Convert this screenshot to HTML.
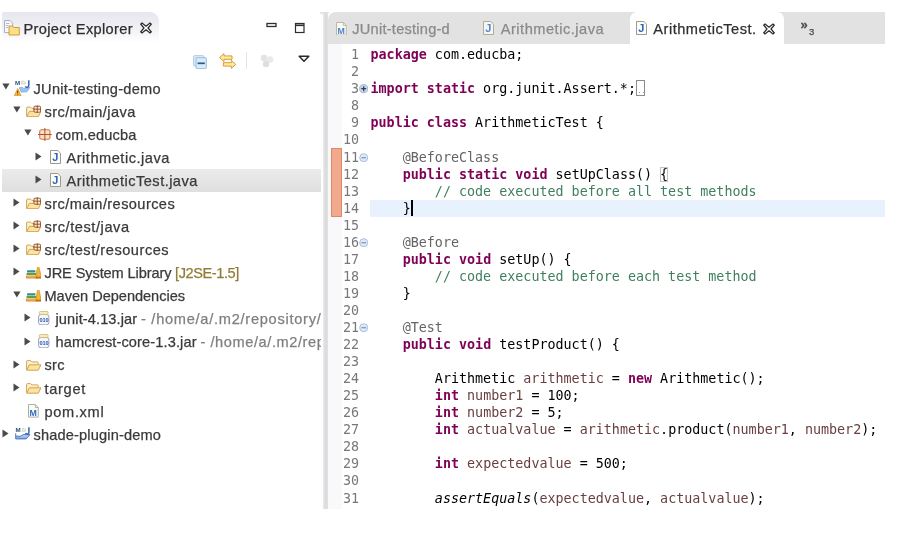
<!DOCTYPE html>
<html lang="en"><head><meta charset="utf-8"><title>Eclipse - ArithmeticTest.java</title>
<style>
html,body{margin:0;padding:0;background:#fff}
body{width:900px;height:537px;position:relative;overflow:hidden;font-family:"Liberation Sans","DejaVu Sans",sans-serif;font-size:14.6px;color:#3a3a3a;letter-spacing:.3px;-webkit-text-stroke:.25px}
.abs{position:absolute}
svg text{-webkit-text-stroke:0}
#all{position:absolute;left:0;top:0;width:900px;height:537px;will-change:transform}
#ptab{position:absolute;left:2px;top:12px;width:157px;height:31px;border-radius:2px 9px 0 0;background:linear-gradient(#e6e6ee,#f1f1f6 55%,#fbfbfd 85%,#fff)}
#ptab .tt{position:absolute;left:21.5px;top:8.500px;white-space:nowrap;color:#2f2f2f}
.row{position:absolute;left:2px;width:318.5px;height:23px;white-space:nowrap;overflow:hidden}
.row.sel{background:linear-gradient(#ebebeb,#dfdfdf)}
.row span.a,.row span.i,.row span.t{position:absolute}
.row span.a{margin-left:-2px;line-height:0}
.row span.i{margin-left:-2px;line-height:0}
.row span.t{top:3px;margin-left:-2px;line-height:18px}
.dy{color:#8f7d35}
.dg{color:#7f7f7f}
#sash{position:absolute;left:323px;top:12px;width:4.5px;height:497px;background:linear-gradient(90deg,#ebebeb,#dadada 55%,#e2e2e2)}
#flare{position:absolute;left:320px;top:12px;width:9px;height:3px;background:linear-gradient(#dedede,#f2f2f2);border-radius:0 0 4px 4px}
#etabs{position:absolute;left:327.5px;top:12px;width:557.5px;height:31.700px;background:#e2e2e2;border-radius:8px 0 0 0}
#etabs .tb{position:absolute;top:9px;white-space:nowrap;color:#8a8a8a}
#atab{position:absolute;left:302px;top:0;width:154px;height:32px;background:#fff;border-radius:7px 7px 0 0}
#ruler{position:absolute;left:328px;top:43.5px;width:14px;height:465px;background:#f9f9fb}
#range{position:absolute;left:330.700px;top:148.300px;width:11.500px;height:68.300px;background:#f3a98b;border:1px solid #d98a6b;box-sizing:border-box}
#curline{position:absolute;left:370px;top:199.5px;width:515px;height:17px;background:#e8f2fe}
.ln{position:absolute;left:327px;height:17px;width:560px;font-family:"DejaVu Sans Mono","Liberation Mono",monospace;font-size:13.36px;line-height:17px;letter-spacing:0;-webkit-text-stroke:0;white-space:pre;color:#000}
.ln .no{position:absolute;left:0;width:32px;text-align:right;color:#787878}
.ln .cd{position:absolute;left:43.5px}
.ln .fo{position:absolute;left:31.500px;top:4.200px}
.k{color:#7f0055;font-weight:bold}
.f{color:#6a3e3e}
.c{color:#3f7f5f}
.an{color:#646464}
.box{display:inline-block;position:relative;width:9px;height:15.500px;border:1px solid #8c8c8c;vertical-align:-2.700px;margin-left:.300px;box-sizing:border-box}
.box:after{content:'';position:absolute;left:1.500px;bottom:1.500px;width:1px;height:1.200px;background:#9a9a9a;box-shadow:4px 0 0 #9a9a9a}
.br{outline:1px solid #c2c2c2;outline-offset:-1px}
.caret{display:inline-block;width:2px;height:16px;background:#000;vertical-align:-3.500px}
</style></head>
<body>
<div id="all">
<div id="ptab"><span class="tt" style="letter-spacing:0.354px">Project Explorer</span></div>

<!-- project explorer tab icon -->
<svg class="abs" style="left:3.500px;top:19.500px" width="16.500" height="16" viewBox="0 0 16.500 16"><path d="M0.600 0.600h5.400l2.600 2.600v9.400h-8z" fill="#fcfcff" stroke="#a3a3ae" stroke-width=".9"/><path d="M2 3.500h3.500M2 5.500h2.500M2 7.500h2" stroke="#9fb0d4" stroke-width=".9"/><path d="M5 15v-9h3.600l1.200 1.500h5.500v7.500z" fill="#fbdf86" stroke="#c9982e" stroke-width=".9" stroke-linejoin="round"/></svg>
<!-- close X -->
<svg class="abs" style="left:139.500px;top:22px" width="12" height="12" viewBox="0 0 12 12"><path d="M2 1l4 3.200 4-3.200 1.200 1.200-3.200 3.800 3.200 3.800-1.200 1.200-4-3.200-4 3.200-1.200-1.200 3.200-3.800-3.200-3.800z" fill="#fff" stroke="#2a2a2a" stroke-width="1.250"/></svg>
<!-- minimize -->
<svg class="abs" style="left:266px;top:21.800px" width="12" height="8" viewBox="0 0 12 8"><rect x="1" y="1.500" width="9" height="3" fill="#fff" stroke="#2e2e2e" stroke-width="1.300"/></svg>
<!-- maximize -->
<svg class="abs" style="left:294px;top:21.600px" width="12" height="13" viewBox="0 0 12 13"><rect x="1.500" y="1.500" width="8.500" height="9" fill="#fff" stroke="#2e2e2e" stroke-width="1.200"/><path d="M1.500 3.300h8.500" stroke="#2e2e2e" stroke-width="1.600"/></svg>
<!-- collapse all -->
<svg class="abs" style="left:192.500px;top:54.500px" width="14" height="14.500" viewBox="0 0 14 14.500"><rect x="0.700" y="0.700" width="10" height="10.300" rx=".8" fill="#e3effa" stroke="#9fc2e2" stroke-width=".9"/><rect x="3" y="2.700" width="10.300" height="11" rx=".8" fill="#d9eafa" stroke="#8db6dc" stroke-width=".9"/><path d="M4.600 8.300h7.200" stroke="#2b5d84" stroke-width="1.700"/></svg>
<!-- link with editor -->
<svg class="abs" style="left:218.500px;top:52.800px" width="17.500" height="17" viewBox="0 0 17.500 17"><path d="M5 0.600l-4.400 4 4.400 4v-2.300h8v-3.400h-8z" fill="#fde9a4" stroke="#d8921f" stroke-width=".9" stroke-linejoin="round"/><path d="M12.300 7.400l4.400 4-4.400 4v-2.300h-8v-3.400h8z" fill="#fde9a4" stroke="#d8921f" stroke-width=".9" stroke-linejoin="round"/></svg>
<!-- separator -->
<div class="abs" style="left:246px;top:52px;width:1px;height:17px;background:#e4e4e4"></div>
<!-- disabled filter icon -->
<svg class="abs" style="left:259px;top:53px" width="17" height="16" viewBox="0 0 17 16"><circle cx="5" cy="5" r="3.200" fill="#e3e3e3"/><circle cx="11" cy="6.500" r="3.200" fill="#e9e9e9"/><circle cx="7" cy="11" r="3.200" fill="#dedede"/></svg>
<!-- view menu -->
<svg class="abs" style="left:297.500px;top:55px" width="12" height="8" viewBox="0 0 12 8"><path d="M1.200 1.200h9.600l-4.800 5z" fill="#fff" stroke="#2a2a2a" stroke-width="1.500" stroke-linejoin="round"/></svg>

<div id="tree">
<div class="row" style="top:76.50px"><span class="a" style="left:1.9px;top:6.6px"><svg class="ar" width="8" height="7" viewBox="0 0 8 7"><path d="M0.3 0.5h7.2l-3.600 6z" fill="#4a4a4a"/></svg></span><span class="i" style="left:13.7px;top:3.3px"><svg width="16.5" height="16.2" viewBox="0 0 16.500 16.200"><path d="M7.600 1.200h2.400l1.200 1.200v1.600h-3.600z" fill="#f4f4ee" stroke="#b9b9a6" stroke-width=".6"/><path d="M5.400 7.700l3.300-.2.900.9 6.400-1-3.200 4.400-5.600.3z" fill="#9dc3ef" stroke="#6d9cd9" stroke-width=".7" stroke-linejoin="round"/><path d="M14.800 0.200v5.200a1.900 1.900 0 0 1-3.500 1" fill="none" stroke="#3565c0" stroke-width="1.500"/><text x="0.900" y="4.900" font-family="Liberation Sans, sans-serif" font-weight="bold" font-size="6.200" fill="#1f4f74">M</text><path d="M3.700 8.600l3.400 7.200h-6.800z" fill="#f8bb45" stroke="#e0902a" stroke-width=".8" stroke-linejoin="round"/><rect x="3.250" y="10.800" width=".9" height="2.400" fill="#5a2d00"/><rect x="3.250" y="13.800" width=".9" height=".9" fill="#5a2d00"/></svg></span><span class="t" style="left:33.5px"><span style="letter-spacing:0.273px">JUnit-testing-demo</span></span></div>
<div class="row" style="top:99.58px"><span class="a" style="left:12.9px;top:6.6px"><svg class="ar" width="8" height="7" viewBox="0 0 8 7"><path d="M0.3 0.5h7.2l-3.600 6z" fill="#4a4a4a"/></svg></span><span class="i" style="left:25.8px;top:5.1px"><svg width="15.7" height="12.3" viewBox="0 0 15.7 12.300"><path d="M0.600 11.200v-8.300q0-.8.800-.8h3.200l1.200 1.300h5.600q.8 0 .8.800v1.700" fill="#fdf1c9" stroke="#cf9a45" stroke-width=".9"/><path d="M0.700 11.700l2.700-5.300h11.600l-2.700 5.300z" fill="#fbe3a2" stroke="#cf9a45" stroke-width=".9" stroke-linejoin="round"/><g stroke="#8b4a22" stroke-width=".9" fill="none"><rect x="8" y="1.200" width="6.600" height="6" rx="1" fill="#fbe9c8"/><path d="M7.300 4.200h8M11.300 0.300v7.600"/></g></svg></span><span class="t" style="left:44.5px"><span style="letter-spacing:0.402px">src/main/java</span></span></div>
<div class="row" style="top:122.66px"><span class="a" style="left:23.9px;top:6.6px"><svg class="ar" width="8" height="7" viewBox="0 0 8 7"><path d="M0.3 0.5h7.2l-3.600 6z" fill="#4a4a4a"/></svg></span><span class="i" style="left:38.3px;top:5.3px"><svg width="13.7" height="13" viewBox="0 0 13.700 13"><rect x="1.700" y="1.800" width="10.300" height="9.400" rx="1.600" fill="#fbdfc6" stroke="#cf7a45" stroke-width="1.100"/><path d="M0 6.500h13.700M6.850 0v13" stroke="#a9542a" stroke-width="1"/></svg></span><span class="t" style="left:55.5px"><span style="letter-spacing:0.148px">com.educba</span></span></div>
<div class="row" style="top:145.74px"><span class="a" style="left:34.7px;top:6.2px"><svg class="ar" width="7" height="9" viewBox="0 0 7 9"><path d="M0.500 0.400v8l6-4z" fill="#4a4a4a"/></svg></span><span class="i" style="left:50.0px;top:4.3px"><svg width="11" height="14" viewBox="0 0 11 14"><path d="M0.500 0.500h7.300l2.700 2.700v10.300h-10z" fill="#fbfcff" stroke="#a09a82" stroke-width="1"/><text x="2.300" y="11" font-family="Liberation Sans, sans-serif" font-weight="bold" font-size="11" fill="#2a68ba">J</text></svg></span><span class="t" style="left:66.5px"><span style="letter-spacing:0.513px">Arithmetic.java</span></span></div>
<div class="row sel" style="top:168.82px"><span class="a" style="left:34.7px;top:6.2px"><svg class="ar" width="7" height="9" viewBox="0 0 7 9"><path d="M0.500 0.400v8l6-4z" fill="#4a4a4a"/></svg></span><span class="i" style="left:50.0px;top:4.3px"><svg width="11" height="14" viewBox="0 0 11 14"><path d="M0.500 0.500h7.300l2.700 2.700v10.300h-10z" fill="#fbfcff" stroke="#a09a82" stroke-width="1"/><text x="2.300" y="11" font-family="Liberation Sans, sans-serif" font-weight="bold" font-size="11" fill="#2a68ba">J</text></svg></span><span class="t" style="left:66.5px"><span style="letter-spacing:0.465px">ArithmeticTest.java</span></span></div>
<div class="row" style="top:191.90px"><span class="a" style="left:12.7px;top:6.2px"><svg class="ar" width="7" height="9" viewBox="0 0 7 9"><path d="M0.500 0.400v8l6-4z" fill="#4a4a4a"/></svg></span><span class="i" style="left:25.8px;top:5.1px"><svg width="15.7" height="12.3" viewBox="0 0 15.7 12.300"><path d="M0.600 11.200v-8.300q0-.8.800-.8h3.200l1.200 1.300h5.600q.8 0 .8.800v1.700" fill="#fdf1c9" stroke="#cf9a45" stroke-width=".9"/><path d="M0.700 11.700l2.700-5.300h11.600l-2.700 5.300z" fill="#fbe3a2" stroke="#cf9a45" stroke-width=".9" stroke-linejoin="round"/><g stroke="#8b4a22" stroke-width=".9" fill="none"><rect x="8" y="1.200" width="6.600" height="6" rx="1" fill="#fbe9c8"/><path d="M7.300 4.200h8M11.300 0.300v7.600"/></g></svg></span><span class="t" style="left:44.5px"><span style="letter-spacing:0.407px">src/main/resources</span></span></div>
<div class="row" style="top:214.98px"><span class="a" style="left:12.7px;top:6.2px"><svg class="ar" width="7" height="9" viewBox="0 0 7 9"><path d="M0.500 0.400v8l6-4z" fill="#4a4a4a"/></svg></span><span class="i" style="left:25.8px;top:5.1px"><svg width="15.7" height="12.3" viewBox="0 0 15.7 12.300"><path d="M0.600 11.200v-8.300q0-.8.800-.8h3.200l1.200 1.300h5.600q.8 0 .8.800v1.700" fill="#fdf1c9" stroke="#cf9a45" stroke-width=".9"/><path d="M0.700 11.700l2.700-5.300h11.600l-2.700 5.300z" fill="#fbe3a2" stroke="#cf9a45" stroke-width=".9" stroke-linejoin="round"/><g stroke="#8b4a22" stroke-width=".9" fill="none"><rect x="8" y="1.200" width="6.600" height="6" rx="1" fill="#fbe9c8"/><path d="M7.300 4.200h8M11.300 0.300v7.600"/></g></svg></span><span class="t" style="left:44.5px"><span style="letter-spacing:0.557px">src/test/java</span></span></div>
<div class="row" style="top:238.06px"><span class="a" style="left:12.7px;top:6.2px"><svg class="ar" width="7" height="9" viewBox="0 0 7 9"><path d="M0.500 0.400v8l6-4z" fill="#4a4a4a"/></svg></span><span class="i" style="left:25.8px;top:5.1px"><svg width="15.7" height="12.3" viewBox="0 0 15.7 12.300"><path d="M0.600 11.200v-8.300q0-.8.800-.8h3.200l1.200 1.300h5.600q.8 0 .8.800v1.700" fill="#fdf1c9" stroke="#cf9a45" stroke-width=".9"/><path d="M0.700 11.700l2.700-5.300h11.600l-2.700 5.300z" fill="#fbe3a2" stroke="#cf9a45" stroke-width=".9" stroke-linejoin="round"/><g stroke="#8b4a22" stroke-width=".9" fill="none"><rect x="8" y="1.200" width="6.600" height="6" rx="1" fill="#fbe9c8"/><path d="M7.300 4.200h8M11.300 0.300v7.600"/></g></svg></span><span class="t" style="left:44.5px"><span style="letter-spacing:0.529px">src/test/resources</span></span></div>
<div class="row" style="top:261.14px"><span class="a" style="left:12.7px;top:6.2px"><svg class="ar" width="7" height="9" viewBox="0 0 7 9"><path d="M0.500 0.400v8l6-4z" fill="#4a4a4a"/></svg></span><span class="i" style="left:25.6px;top:6.1px"><svg width="15.7" height="11.7" viewBox="0 0 15.700 11.700"><rect x="1" y="3.300" width="8.400" height="2.300" rx=".4" fill="#2f8f8c"/><rect x="0.500" y="5.900" width="10" height="2.400" rx=".4" fill="#6d9a3a"/><rect x="0" y="8.700" width="11.400" height="2.700" rx=".4" fill="#e08a28"/><path d="M1 9.900h9.500" stroke="#f8d8a0" stroke-width=".7"/><path d="M11.400 0.400q1-.6 1.700 0l2.400 10.900h-5.800z" fill="#f0b93a" stroke="#d08a1c" stroke-width=".7"/><path d="M10 10.400h5.300" stroke="#c86a14" stroke-width="1.400"/></svg></span><span class="t" style="left:44.5px"><span style="letter-spacing:-0.114px">JRE System Library</span><span class="dy" style="margin-left:3.700px;letter-spacing:-0.434px">[J2SE-1.5]</span></span></div>
<div class="row" style="top:284.22px"><span class="a" style="left:12.9px;top:6.6px"><svg class="ar" width="8" height="7" viewBox="0 0 8 7"><path d="M0.3 0.5h7.2l-3.600 6z" fill="#4a4a4a"/></svg></span><span class="i" style="left:25.6px;top:6.1px"><svg width="15.7" height="11.7" viewBox="0 0 15.700 11.700"><rect x="1" y="3.300" width="8.400" height="2.300" rx=".4" fill="#2f8f8c"/><rect x="0.500" y="5.900" width="10" height="2.400" rx=".4" fill="#6d9a3a"/><rect x="0" y="8.700" width="11.400" height="2.700" rx=".4" fill="#e08a28"/><path d="M1 9.900h9.500" stroke="#f8d8a0" stroke-width=".7"/><path d="M11.400 0.400q1-.6 1.700 0l2.400 10.900h-5.800z" fill="#f0b93a" stroke="#d08a1c" stroke-width=".7"/><path d="M10 10.400h5.300" stroke="#c86a14" stroke-width="1.400"/></svg></span><span class="t" style="left:44.5px"><span style="letter-spacing:-0.037px">Maven Dependencies</span></span></div>
<div class="row" style="top:307.30px"><span class="a" style="left:23.7px;top:6.2px"><svg class="ar" width="7" height="9" viewBox="0 0 7 9"><path d="M0.500 0.400v8l6-4z" fill="#4a4a4a"/></svg></span><span class="i" style="left:38.4px;top:3.5px"><svg width="11.4" height="14.4" viewBox="0 0 11.400 14.400"><rect x="0.500" y="3.300" width="10.400" height="10.600" rx="2.600" fill="#f3f6fc" stroke="#8c9cc2" stroke-width=".9"/><rect x="1.300" y="0.500" width="8.800" height="3" rx="1" fill="#f6ecc0" stroke="#cdb96a" stroke-width=".8"/><text x="1.500" y="11.300" font-family="Liberation Sans, sans-serif" font-weight="bold" font-size="5.600" fill="#2f55a4" style="letter-spacing:-.1px">010</text></svg></span><span class="t" style="left:55.5px"><span style="letter-spacing:0.106px">junit-4.13.jar</span><span class="dg" style="margin-left:3.700px;letter-spacing:0.731px">- /home/a/.m2/repository/</span></span></div>
<div class="row" style="top:330.38px"><span class="a" style="left:23.7px;top:6.2px"><svg class="ar" width="7" height="9" viewBox="0 0 7 9"><path d="M0.500 0.400v8l6-4z" fill="#4a4a4a"/></svg></span><span class="i" style="left:38.4px;top:3.5px"><svg width="11.4" height="14.4" viewBox="0 0 11.400 14.400"><rect x="0.500" y="3.300" width="10.400" height="10.600" rx="2.600" fill="#f3f6fc" stroke="#8c9cc2" stroke-width=".9"/><rect x="1.300" y="0.500" width="8.800" height="3" rx="1" fill="#f6ecc0" stroke="#cdb96a" stroke-width=".8"/><text x="1.500" y="11.300" font-family="Liberation Sans, sans-serif" font-weight="bold" font-size="5.600" fill="#2f55a4" style="letter-spacing:-.1px">010</text></svg></span><span class="t" style="left:55.5px"><span style="letter-spacing:0.120px">hamcrest-core-1.3.jar</span><span class="dg" style="margin-left:3.700px;letter-spacing:0.577px">- /home/a/.m2/rep</span></span></div>
<div class="row" style="top:353.46px"><span class="a" style="left:12.7px;top:6.2px"><svg class="ar" width="7" height="9" viewBox="0 0 7 9"><path d="M0.500 0.400v8l6-4z" fill="#4a4a4a"/></svg></span><span class="i" style="left:25.7px;top:6.7px"><svg width="15.6" height="10.7" viewBox="0 0 15.600 10.700"><path d="M0.600 9.800v-8.400q0-.8.800-.8h3.200l1.200 1.300h5.600q.8 0 .8.800v1.500" fill="#fdf1c9" stroke="#cf9a45" stroke-width=".9"/><path d="M0.700 10.200l2.700-5.400h11.600l-2.700 5.400z" fill="#fbe3a2" stroke="#cf9a45" stroke-width=".9" stroke-linejoin="round"/></svg></span><span class="t" style="left:44.5px"><span style="letter-spacing:0.244px">src</span></span></div>
<div class="row" style="top:376.54px"><span class="a" style="left:12.7px;top:6.2px"><svg class="ar" width="7" height="9" viewBox="0 0 7 9"><path d="M0.500 0.400v8l6-4z" fill="#4a4a4a"/></svg></span><span class="i" style="left:25.7px;top:6.7px"><svg width="15.6" height="10.7" viewBox="0 0 15.600 10.700"><path d="M0.600 9.800v-8.400q0-.8.800-.8h3.200l1.200 1.300h5.600q.8 0 .8.800v1.500" fill="#fdf1c9" stroke="#cf9a45" stroke-width=".9"/><path d="M0.700 10.200l2.700-5.400h11.600l-2.700 5.400z" fill="#fbe3a2" stroke="#cf9a45" stroke-width=".9" stroke-linejoin="round"/></svg></span><span class="t" style="left:44.5px"><span style="letter-spacing:0.695px">target</span></span></div>
<div class="row" style="top:399.62px"><span class="i" style="left:28.3px;top:4.8px"><svg width="10.800" height="13.600" viewBox="0 0 10.800 13.600"><path d="M0.500 0.500h6.800l3 3v9.600h-9.800z" fill="#fdfdf8" stroke="#aeb09a" stroke-width="1"/><path d="M7.300 0.500v3h3" fill="none" stroke="#aeb09a" stroke-width=".9"/><text x="1.400" y="11.600" font-family="Liberation Sans, sans-serif" font-weight="bold" font-size="8.800" fill="#2a69c4">M</text></svg></span><span class="t" style="left:44.5px"><span style="letter-spacing:0.666px">pom.xml</span></span></div>
<div class="row" style="top:422.70px"><span class="a" style="left:1.7px;top:6.2px"><svg class="ar" width="7" height="9" viewBox="0 0 7 9"><path d="M0.500 0.400v8l6-4z" fill="#4a4a4a"/></svg></span><span class="i" style="left:14.7px;top:4.5px"><svg width="15.5" height="12.6" viewBox="0 0 15.500 12.600"><defs><linearGradient id="pf" x1="0" y1="0" x2="0" y2="1"><stop offset="0" stop-color="#dbe8fa"/><stop offset="1" stop-color="#7ea9e2"/></linearGradient></defs><path d="M7.300 1.500h2l1 1v1.800h-3z" fill="#f4f4ee" stroke="#b9b9a6" stroke-width=".6"/><path d="M0.700 6.300v5.600h10.400l3.900-4.300h-6.800l-2.600 1.600h-4.900" fill="url(#pf)" stroke="#3f68b8" stroke-width=".9" stroke-linejoin="round"/><path d="M13.900 0.300v4.900a1.800 1.800 0 0 1-3.400.9" fill="none" stroke="#3565c0" stroke-width="1.500"/><text x="0.500" y="5" font-family="Liberation Sans, sans-serif" font-weight="bold" font-size="6.200" fill="#1f4f74">M</text></svg></span><span class="t" style="left:33.5px"><span style="letter-spacing:0.156px">shade-plugin-demo</span></span></div>
</div>
<div id="flare"></div><div id="sash"></div>

<div id="etabs">
 <span class="abs" style="left:8.300px;top:9.500px;line-height:0"><svg opacity=".8" width="10.800" height="13.600" viewBox="0 0 10.800 13.600"><path d="M0.500 0.500h6.800l3 3v9.600h-9.800z" fill="#fdfdf8" stroke="#aeb09a" stroke-width="1"/><path d="M7.300 0.500v3h3" fill="none" stroke="#aeb09a" stroke-width=".9"/><text x="1.400" y="11.600" font-family="Liberation Sans, sans-serif" font-weight="bold" font-size="8.800" fill="#2a69c4">M</text></svg></span>
 <span class="tb" style="left:24.800px;letter-spacing:0.240px">JUnit-testing-d</span>
 <span class="abs" style="left:155.800px;top:9.300px;line-height:0"><svg opacity=".75" width="11" height="14" viewBox="0 0 11 14"><path d="M0.500 0.500h7.300l2.700 2.700v10.300h-10z" fill="#fbfcff" stroke="#a09a82" stroke-width="1"/><text x="2.300" y="11" font-family="Liberation Sans, sans-serif" font-weight="bold" font-size="11" fill="#2a68ba">J</text></svg></span>
 <span class="tb" style="left:173.200px;letter-spacing:0.513px">Arithmetic.java</span>
 <div id="atab"></div>
 <span class="abs" style="left:308.500px;top:9.100px;line-height:0"><svg width="11" height="14" viewBox="0 0 11 14"><path d="M0.500 0.500h7.300l2.700 2.700v10.300h-10z" fill="#fbfcff" stroke="#a09a82" stroke-width="1"/><text x="2.300" y="11" font-family="Liberation Sans, sans-serif" font-weight="bold" font-size="11" fill="#2a68ba">J</text></svg></span>
 <span class="tb" style="left:325.800px;color:#2f2f2f;letter-spacing:0.513px">ArithmeticTest.</span>
 <svg class="abs" style="left:435px;top:11px" width="12" height="12" viewBox="0 0 12 12"><path d="M2 1l4 3.200 4-3.200 1.200 1.200-3.200 3.800 3.200 3.800-1.200 1.200-4-3.200-4 3.200-1.200-1.200 3.200-3.800-3.200-3.800z" fill="#fff" stroke="#2a2a2a" stroke-width="1.250"/></svg>
 <span class="abs" style="left:473px;top:5px;font-size:13px;font-weight:bold;color:#4a4a4a;letter-spacing:-1px">&raquo;</span>
 <span class="abs" style="left:481.500px;top:14px;font-size:9.500px;color:#4a4a4a">3</span>
</div>

<div id="ruler"></div>
<div id="range"></div>
<div id="curline"></div>
<div id="code">
<div class="ln" style="top:46.20px"><span class="no">1</span><span class="cd"><b class="k">package</b> com.educba;</span></div>
<div class="ln" style="top:63.25px"><span class="no">2</span><span class="cd"></span></div>
<div class="ln" style="top:80.30px"><span class="no">3</span><svg class="fo" width="9.4" height="9.4" viewBox="0 0 9.400 9.400"><circle cx="4.700" cy="4.700" r="4.100" fill="#c9d7e8" stroke="#9fb3cc" stroke-width=".9"/><path d="M2.200 4.700h5M4.700 2.200v5" stroke="#2b4262" stroke-width="1.300"/></svg><span class="cd"><b class="k">import</b> <b class="k">static</b> org.junit.Assert.*;<span class="box"></span></span></div>
<div class="ln" style="top:97.35px"><span class="no">8</span><span class="cd"></span></div>
<div class="ln" style="top:114.40px"><span class="no">9</span><span class="cd"><b class="k">public</b> <b class="k">class</b> ArithmeticTest {</span></div>
<div class="ln" style="top:131.45px"><span class="no">10</span><span class="cd"></span></div>
<div class="ln" style="top:148.50px"><span class="no">11</span><svg class="fo" width="9.4" height="9.4" viewBox="0 0 9.400 9.400"><circle cx="4.700" cy="4.700" r="4" fill="#e0eaf6" stroke="#a9bddb" stroke-width="1"/><path d="M2.400 4.700h4.600" stroke="#7c9ccc" stroke-width="1.300"/></svg><span class="cd">    <span class="an">@BeforeClass</span></span></div>
<div class="ln" style="top:165.55px"><span class="no">12</span><span class="cd">    <b class="k">public</b> <b class="k">static</b> <b class="k">void</b> setUpClass() <span class="br">{</span></span></div>
<div class="ln" style="top:182.60px"><span class="no">13</span><span class="cd">        <span class="c">// code executed before all test methods</span></span></div>
<div class="ln" style="top:199.65px"><span class="no">14</span><span class="cd">    }<span class="caret"></span></span></div>
<div class="ln" style="top:216.70px"><span class="no">15</span><span class="cd"></span></div>
<div class="ln" style="top:233.75px"><span class="no">16</span><svg class="fo" width="9.4" height="9.4" viewBox="0 0 9.400 9.400"><circle cx="4.700" cy="4.700" r="4" fill="#e0eaf6" stroke="#a9bddb" stroke-width="1"/><path d="M2.400 4.700h4.600" stroke="#7c9ccc" stroke-width="1.300"/></svg><span class="cd">    <span class="an">@Before</span></span></div>
<div class="ln" style="top:250.80px"><span class="no">17</span><span class="cd">    <b class="k">public</b> <b class="k">void</b> setUp() {</span></div>
<div class="ln" style="top:267.85px"><span class="no">18</span><span class="cd">        <span class="c">// code executed before each test method</span></span></div>
<div class="ln" style="top:284.90px"><span class="no">19</span><span class="cd">    }</span></div>
<div class="ln" style="top:301.95px"><span class="no">20</span><span class="cd"></span></div>
<div class="ln" style="top:319.00px"><span class="no">21</span><svg class="fo" width="9.4" height="9.4" viewBox="0 0 9.400 9.400"><circle cx="4.700" cy="4.700" r="4" fill="#e0eaf6" stroke="#a9bddb" stroke-width="1"/><path d="M2.400 4.700h4.600" stroke="#7c9ccc" stroke-width="1.300"/></svg><span class="cd">    <span class="an">@Test</span></span></div>
<div class="ln" style="top:336.05px"><span class="no">22</span><span class="cd">    <b class="k">public</b> <b class="k">void</b> testProduct() {</span></div>
<div class="ln" style="top:353.10px"><span class="no">23</span><span class="cd"></span></div>
<div class="ln" style="top:370.15px"><span class="no">24</span><span class="cd">        Arithmetic <span class="f">arithmetic</span> = <b class="k">new</b> Arithmetic();</span></div>
<div class="ln" style="top:387.20px"><span class="no">25</span><span class="cd">        <b class="k">int</b> <span class="f">number1</span> = 100;</span></div>
<div class="ln" style="top:404.25px"><span class="no">26</span><span class="cd">        <b class="k">int</b> <span class="f">number2</span> = 5;</span></div>
<div class="ln" style="top:421.30px"><span class="no">27</span><span class="cd">        <b class="k">int</b> <span class="f">actualvalue</span> = <span class="f">arithmetic</span>.product(<span class="f">number1</span>, <span class="f">number2</span>);</span></div>
<div class="ln" style="top:438.35px"><span class="no">28</span><span class="cd"></span></div>
<div class="ln" style="top:455.40px"><span class="no">29</span><span class="cd">        <b class="k">int</b> <span class="f">expectedvalue</span> = 500;</span></div>
<div class="ln" style="top:472.45px"><span class="no">30</span><span class="cd"></span></div>
<div class="ln" style="top:489.50px"><span class="no">31</span><span class="cd">        <i>assertEquals</i>(<span class="f">expectedvalue</span>, <span class="f">actualvalue</span>);</span></div>
</div>
</div>
</body></html>
